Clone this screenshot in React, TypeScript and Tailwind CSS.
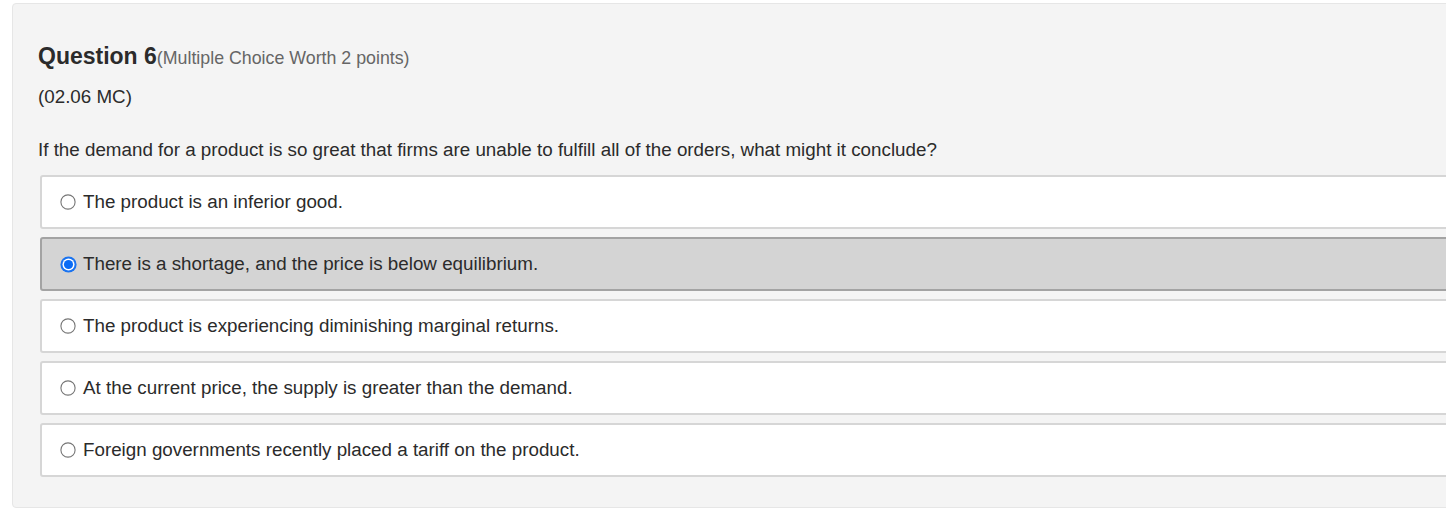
import { useState } from 'react';

const options = [
  'The product is an inferior good.',
  'There is a shortage, and the price is below equilibrium.',
  'The product is experiencing diminishing marginal returns.',
  'At the current price, the supply is greater than the demand.',
  'Foreign governments recently placed a tariff on the product.',
];

function Radio({ checked }: { checked: boolean }) {
  if (checked) {
    return (
      <svg width="17" height="17" viewBox="0 0 16 16" className="shrink-0">
        <circle cx="8" cy="8" r="7.6" fill="#1a73f0" />
        <circle cx="8" cy="8" r="5.7" fill="#ffffff" />
        <circle cx="8" cy="8" r="4.3" fill="#0a6cf5" />
      </svg>
    );
  }
  return (
    <svg width="16" height="16" viewBox="0 0 16 16" className="shrink-0">
      <circle cx="8" cy="8" r="7.1" fill="#ffffff" stroke="#767676" strokeWidth="1.1" />
    </svg>
  );
}

export default function App() {
  const [selected, setSelected] = useState(1);

  return (
    <div className="h-[508px] w-[1446px] overflow-hidden bg-white pl-[12px] pt-[3px] font-['Liberation_Sans',Arial,sans-serif] text-[#2b2b2b]">
      <div className="h-[505px] w-[1470px] rounded-sm border border-[#e6e6e6] bg-[#f4f4f4] pl-[25px] pt-[38px]">
        {/* Header */}
        <h2 className="flex items-baseline text-[23px] leading-[28px]">
          <span className="font-bold text-[#2b2b2b]">Question 6</span>
          <span className="text-[17.8px] text-[#666]">(Multiple Choice Worth 2 points)</span>
        </h2>
        <p className="mt-[14px] text-[18.8px] leading-[22px]">(02.06 MC)</p>

        <p className="mt-[31px] text-[18.8px] leading-[22px]">
          If the demand for a product is so great that firms are unable to fulfill all of the orders, what might it
          conclude?
        </p>

        {/* Options */}
        <div className="ml-[2px] mt-[14px] flex flex-col gap-[8px]">
          {options.map((opt, i) => {
            const isSel = selected === i;
            return (
              <label
                key={opt}
                onClick={() => setSelected(i)}
                className={
                  isSel
                    ? 'flex h-[54px] cursor-pointer items-center gap-[6px] rounded-[3px] border-2 border-[#a3a3a3] bg-[#d4d4d4] pl-[18px] text-[18.8px]'
                    : 'flex h-[54px] cursor-pointer items-center gap-[7px] rounded-[3px] border-2 border-[#d6d6d6] bg-white pl-[18px] text-[18.8px]'
                }
              >
                <Radio checked={isSel} />
                <span>{opt}</span>
              </label>
            );
          })}
        </div>
      </div>
    </div>
  );
}
